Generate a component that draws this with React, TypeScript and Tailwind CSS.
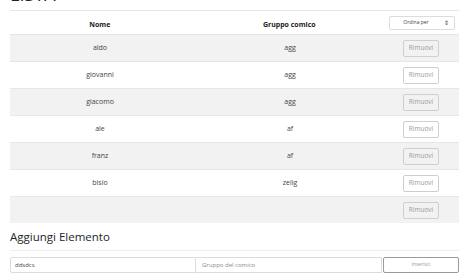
import React from "react";

const rows = [
  ["aldo", "agg"],
  ["giovanni", "agg"],
  ["giacomo", "agg"],
  ["ale", "af"],
  ["franz", "af"],
  ["bisio", "zelig"],
  ["", ""],
];

export default function App() {
  return (
    <div className="w-[474px] h-[277px] overflow-hidden bg-white text-[#333]" style={{ fontFamily: '"Open Sans", sans-serif' }}>
      <div className="pl-[10px] w-[459px] mt-[-15px]">
        <div className="text-[18px] leading-[18px] text-[#212529]">LISTA</div>
        <div className="mt-[7px] border-t border-[#e6e6e6]">
          <div className="flex h-[23px] items-center text-[7px] font-bold text-[#222]">
            <div className="w-[180px] text-center self-end pb-[4px]">Nome</div>
            <div className="w-[200px] text-center self-end pb-[4px]">Gruppo comico</div>
            <div className="flex-1 flex justify-end pr-[4px]">
              <div className="w-[66px] h-[14px] border border-[#dcdcdc] rounded-[2px] flex items-center justify-between pl-[8px] pr-[5px] font-normal text-[5px] bg-white text-[#444]">
                <span className="flex-1 text-center pr-[10px]">Ordina per</span>
                <span className="text-[6px] leading-none">⇕</span>
              </div>
            </div>
          </div>
          {rows.map((r, i) => (
            <div key={i} className={`flex h-[27px] items-center text-[7px] text-[#444] border-t border-[#e6e6e6] ${i % 2 === 0 ? "bg-[#f2f2f2]" : "bg-white"}`}>
              <div className="w-[180px] text-center">{r[0]}</div>
              <div className="w-[200px] text-center">{r[1]}</div>
              <div className="flex-1 flex justify-start pl-[13px]">
                <div className="w-[36px] h-[17px] border border-[#cfcfcf] rounded-[2px] flex items-center justify-center text-[6.5px] text-[#9a9a9a]">Rimuovi</div>
              </div>
            </div>
          ))}
        </div>
        <div className="mt-[6px] text-[11.5px] leading-[16px] text-[#212529]">Aggiungi Elemento</div>
        <div className="mt-[5px] border-t border-[#eee] pt-[6px] flex">
          <div className="w-[186px] h-[16px] border border-[#dcdcdc] rounded-l-[2px] flex items-center px-[4px] text-[6px] text-[#444]">ddsdcs</div>
          <div className="w-[186px] h-[16px] border border-l-0 border-[#dcdcdc] flex items-center px-[6px] text-[6px] text-[#8a8a8a]">Gruppo del comico</div>
          <div className="ml-[1px] w-[76px] h-[16px] border border-[#9a9a9a] rounded-[2px] flex items-center justify-center text-[5px] text-[#999]">Inserisci</div>
        </div>
      </div>
    </div>
  );
}
